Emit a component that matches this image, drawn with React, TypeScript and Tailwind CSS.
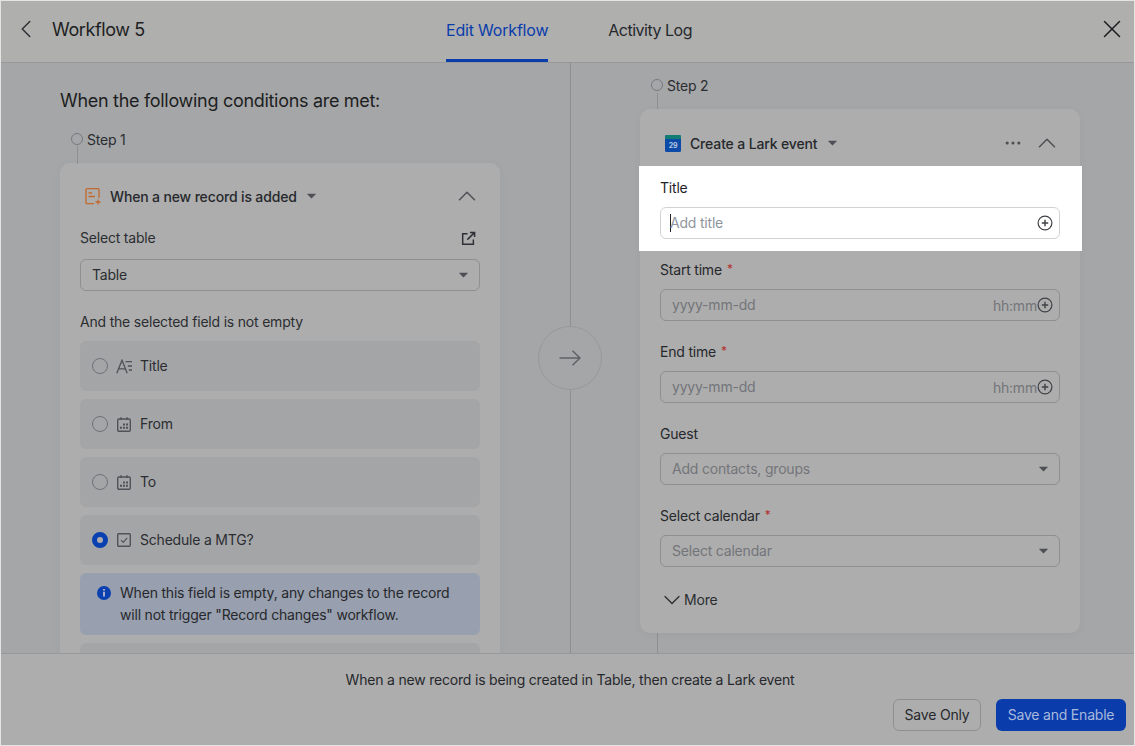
import { ChevronLeft, ChevronDown, ChevronUp, X, Ellipsis } from 'lucide-react';

const Caret = ({ className = '' }: { className?: string }) => (
  <svg width="9" height="6" viewBox="0 0 10 6" className={className}>
    <path d="M0.6 0.4h8.8a.4.4 0 0 1 .3.7L5.3 5.5a.4.4 0 0 1-.6 0L.3 1.1a.4.4 0 0 1 .3-.7z" fill="#4e5055" />
  </svg>
);

const PlusCircle = () => (
  <svg width="16" height="16" viewBox="0 0 16 16" fill="none" stroke="#3f4146" strokeWidth="1.2" className="shrink-0">
    <circle cx="8" cy="8" r="6.9" />
    <path d="M8 4.8v6.4M4.8 8h6.4" strokeWidth="1.4" />
  </svg>
);

const RecordIcon = () => (
  <svg width="16" height="17" viewBox="0 0 16 17" fill="none" stroke="#c16a2e" strokeWidth="1.3" className="shrink-0">
    <path d="M9 15.700H2a1 1 0 0 1-1-1V1.700a1 1 0 0 1 1-1h11a1 1 0 0 1 1 1V10" />
    <path d="M3.500 5h3.500M3.500 8.500h6.500" />
    <path d="M13 11.500v5M10.500 14h5" />
  </svg>
);

const TextIcon = () => (
  <svg width="17" height="15" viewBox="0 0 17 15" fill="none" stroke="#505257" strokeWidth="1.3" className="shrink-0">
    <path d="M0.800 14.300 6 1.200 11.200 14.300M2.700 9.800h6.600" />
    <path d="M9.500 2.700h6.500M11.800 7h4.200M12.800 11h3.200" />
  </svg>
);

const DateIcon = () => (
  <svg width="14" height="15" viewBox="0 0 14 15" fill="none" className="shrink-0">
    <rect x="0.700" y="2" width="12.600" height="12.300" rx="1.200" stroke="#505257" strokeWidth="1.400" />
    <path d="M4 0.300v2.700M10 0.300v2.700" stroke="#505257" strokeWidth="1.400" />
    <path d="M6 6.500h2v2H6zM9 6.500h2v2H9zM3 9.800h2v2H3zM6 9.800h2v2H6zM9 9.800h2v2H9z" fill="#505257" />
  </svg>
);

const CheckIcon = () => (
  <svg width="14" height="14" viewBox="0 0 14 14" fill="none" stroke="#505257" className="shrink-0">
    <rect x="0.700" y="0.700" width="12.600" height="12.600" rx="1" strokeWidth="1.400" />
    <path d="M4 7.200 6.200 9.400 10.200 4.800" strokeWidth="1.100" />
  </svg>
);

const ExternalIcon = () => (
  <svg width="15" height="15" viewBox="0 0 16 16" fill="none" stroke="#2e3035" strokeWidth="1.600" className="shrink-0 mr-[4px]">
    <path d="M7 2.800H1.800v11.400h11.400V9" />
    <path d="M6.800 9.200 14 2M9.600 1.500h4.900v4.900" />
  </svg>
);

const CalendarLogo = () => (
  <svg width="16" height="17" viewBox="0 0 16 17" className="shrink-0">
    <rect x="0" y="0" width="16" height="17" rx="1.500" fill="#0c4aa8" />
    <path d="M0 1.500A1.500 1.500 0 0 1 1.500 0h13A1.500 1.500 0 0 1 16 1.500V4H0z" fill="#0f7d74" />
    <text x="8" y="12.500" textAnchor="middle" fontSize="7" fontWeight="700" fill="#b9c7df" fontFamily="Inter, sans-serif">29</text>
  </svg>
);

const StepLabel = ({ label }: { label: string }) => (
  <div className="flex items-center gap-[4px] h-[22px] ml-[11px] text-[14px] text-[#2b2d31]">
    <span className="w-[12px] h-[12px] rounded-full border border-[#77797d] bg-[#a5a6a8]" />
    {label}
  </div>
);

const Required = () => <span className="text-[#b3312e] ml-[5px] relative -top-[2px] text-[12px]">*</span>;

function Field({ label, required, children }: { label: string; required?: boolean; children: React.ReactNode }) {
  return (
    <div>
      <div className="h-[22px] mb-[8px] text-[14px] leading-[22px] text-[#26282c]">
        {label}
        {required && <Required />}
      </div>
      {children}
    </div>
  );
}

function DateInput() {
  return (
    <div className="h-[32px] flex items-center pl-[11px] pr-[6px] rounded-[6px] border border-[#8e8f91] text-[14px] text-[#73757a]">
      <span className="flex-1 pb-[2px]">yyyy-mm-dd</span>
      <span>hh:mm</span>
      <PlusCircle />
    </div>
  );
}

function SelectBox({ text, dark }: { text: string; dark?: boolean }) {
  return (
    <div className={`h-[32px] flex items-center justify-between px-[11px] rounded-[6px] border border-[#8e8f91] text-[14px] ${dark ? 'text-[#2b2d31]' : 'text-[#73757a]'}`}>
      <span className="pb-[2px]">{text}</span>
      <Caret />
    </div>
  );
}

function FieldRow({ icon, label, checked }: { icon: React.ReactNode; label: string; checked?: boolean }) {
  return (
    <div className="h-[50px] shrink-0 flex items-center pl-[12px] rounded-[6px] bg-[#a4a5a7] text-[14px] text-[#2b2d31]">
      {checked ? (
        <span className="w-[16px] h-[16px] rounded-full border-[5px] border-[#0b40b0] bg-[#adadad]" />
      ) : (
        <span className="w-[16px] h-[16px] rounded-full border border-[#6f7175]" />
      )}
      <span className="w-[16px] ml-[8px] flex justify-center">{icon}</span>
      <span className="ml-[8px] pb-[2px]">{label}</span>
    </div>
  );
}

export default function App() {
  return (
    <div className="h-[746px] w-[1135px] flex flex-col overflow-hidden border border-[#e4e4e4] bg-[#a5a6a8] tracking-[-0.2px] font-['Inter',sans-serif]">
      <header className="h-[62px] shrink-0 flex items-center bg-[#afafae] border-b border-[#97989a]">
        <div className="flex-1 flex items-center pl-[10px] -mt-[5px]">
          <ChevronLeft size={30} strokeWidth={1.2} className="text-[#2e3035]" />
          <span className="ml-[11px] text-[18px] tracking-[-0.4px] text-[#1d1e21]">Workflow 5</span>
        </div>
        <nav className="flex gap-[60px] h-full text-[16px]">
          <div className="h-full flex items-center border-b-[3px] border-[#0a3dab] text-[#0a3dab] -mb-px">Edit Workflow</div>
          <div className="h-full flex items-center border-b-[3px] border-transparent tracking-[-0.5px] text-[#26282c] -mb-px">Activity Log</div>
        </nav>
        <div className="flex-1 flex justify-end pr-[7px] -mt-[5px]">
          <X size={30} strokeWidth={1.2} className="text-[#1d1e21]" />
        </div>
      </header>

      <main className="flex-1 min-h-0 flex overflow-hidden">
        <section className="relative w-[570px] shrink-0 border-r border-[#8e8f91] pl-[59px] pt-[26px] overflow-visible">
          <h2 className="h-[24px] leading-[24px] text-[18px] tracking-[-0.3px] text-[#1d1e21]">When the following conditions are met:</h2>
          <div className="mt-[15px]">
            <StepLabel label="Step 1" />
          </div>
          <div className="absolute left-[76px] top-[83px] w-px h-[18px] bg-[#8e8f91]" />
          <div className="w-[440px] mt-[13px] px-[20px] pt-[19px] rounded-t-[10px] bg-[#adadad] shadow-[0_2px_10px_rgba(0,0,0,0.04)]">
            <div className="h-[28px] flex items-center text-[14px] text-[#26282c]">
              <span className="ml-[5px]"><RecordIcon /></span>
              <span className="ml-[9px] font-[450] tracking-[-0.15px]">When a new record is added</span>
              <Caret className="ml-[10px]" />
              <ChevronUp size={30} strokeWidth={1.2} className="ml-auto -my-[4px] -mr-[2px] text-[#4e5055]" />
            </div>
            <div className="mt-[17px] h-[22px] flex items-center justify-between text-[14px] text-[#2b2d31]">
              <span className="pb-[2px]">Select table</span>
              <ExternalIcon />
            </div>
            <div className="mt-[10px]">
              <SelectBox text="Table" dark />
            </div>
            <div className="mt-[20px] h-[22px] leading-[22px] text-[14px] text-[#2b2d31]">And the selected field is not empty</div>
            <div className="mt-[8px] flex flex-col gap-[8px]">
              <FieldRow icon={<TextIcon />} label="Title" />
              <FieldRow icon={<DateIcon />} label="From" />
              <FieldRow icon={<DateIcon />} label="To" />
              <FieldRow icon={<CheckIcon />} label="Schedule a MTG?" checked />
              <div className="h-[62px] shrink-0 flex gap-[8px] pl-[16px] pt-[9px] rounded-[6px] bg-[#989fae] text-[14px] leading-[22px] text-[#26282c]">
                <svg width="16" height="16" viewBox="0 0 16 16" className="shrink-0 mt-[3px]">
                  <circle cx="8" cy="8" r="7" fill="#0b40b0" />
                  <path d="M7.100 4h1.800v1.600H7.100zM7.100 6.800h1.800v4.800H7.100z" fill="#b5bcca" />
                </svg>
                <div>When this field is empty, any changes to the record<br />will not trigger "Record changes" workflow.</div>
              </div>
              <div className="h-[50px] shrink-0 rounded-[6px] bg-[#a4a5a7]" />
            </div>
          </div>
          <div className="absolute left-[537px] top-[263px] w-[64px] h-[64px] rounded-full border border-[#98999b] bg-[#a5a6a8] flex items-center justify-center">
            <svg width="22" height="16" viewBox="0 0 22 16" fill="none" stroke="#606266" strokeWidth="1.500">
              <path d="M0.500 8h20.500M13.500 0.800 21 8l-7.500 7.200" />
            </svg>
          </div>
        </section>

        <section className="relative flex-1 pl-[69px] pt-[11px]">
          <div className="absolute left-[86px] top-[30px] bottom-0 w-px bg-[#8e8f91]" />
          <div className="relative">
            <StepLabel label="Step 2" />
            <div className="relative w-[440px] mt-[13px] rounded-[10px] bg-[#adadad] shadow-[0_2px_10px_rgba(0,0,0,0.04)]">
              <div className="h-[57px] pt-[20px] pl-[25px] pr-[23px] flex items-start">
                <div className="h-[28px] w-full flex items-center text-[14px] text-[#26282c]">
                  <CalendarLogo />
                  <span className="ml-[9px] font-[450] tracking-[-0.15px]">Create a Lark event</span>
                  <Caret className="ml-[11px]" />
                  <Ellipsis size={20} strokeWidth={1.8} className="ml-auto text-[#4e5055]" />
                  <ChevronUp size={30} strokeWidth={1.2} className="ml-[9px] -my-[4px] -mr-[5px] text-[#4e5055]" />
                </div>
              </div>
              <div className="-ml-px -mr-[2px] pl-[21px] pr-[22px] pt-[11px] pb-[12px] bg-white">
                <div className="h-[22px] mb-[8px] text-[14px] leading-[22px] text-[#1f2329]">Title</div>
                <div className="h-[32px] flex items-center pl-[9px] pr-[6px] rounded-[6px] border border-[#d0d3d6] text-[14px] text-[#8f959e]">
                  <span className="w-px h-[18px] bg-[#1f2329]" />
                  <span className="flex-1 -ml-px pb-[2px]">Add title</span>
                  <PlusCircle />
                </div>
              </div>
              <div className="px-[20px] pt-[8px] flex flex-col gap-[20px]">
                <Field label="Start time" required><DateInput /></Field>
                <Field label="End time" required><DateInput /></Field>
                <Field label="Guest"><SelectBox text="Add contacts, groups" /></Field>
                <Field label="Select calendar" required><SelectBox text="Select calendar" /></Field>
              </div>
              <div className="h-[66px] pl-[18px] pt-[22px] flex items-start">
                <div className="h-[22px] flex items-center text-[14px] text-[#2b2d31]">
                  <ChevronDown size={28} strokeWidth={1.2} className="-my-[3px] text-[#2e3035]" />
                  <span className="-ml-[2px] pb-[2px]">More</span>
                </div>
              </div>
            </div>
          </div>
        </section>
      </main>

      <footer className="h-[92px] shrink-0 relative bg-[#adadad] border-t border-[#98999b] pt-[15px] pr-[8px] flex flex-col">
        <p className="h-[22px] leading-[22px] text-center text-[14px] text-[#26282c] pl-[13px]">When a new record is being created in Table, then create a Lark event</p>
        <div className="mt-[8px] flex justify-end gap-[15px] text-[14px]">
          <button className="h-[32px] w-[88px] pb-[2px] rounded-[6px] border border-[#8e8f91] text-[#26282c]">Save Only</button>
          <button className="h-[32px] w-[130px] pb-[2px] rounded-[6px] bg-[#0a3dab] text-[#a9b9dc]">Save and Enable</button>
        </div>
      </footer>
    </div>
  );
}
